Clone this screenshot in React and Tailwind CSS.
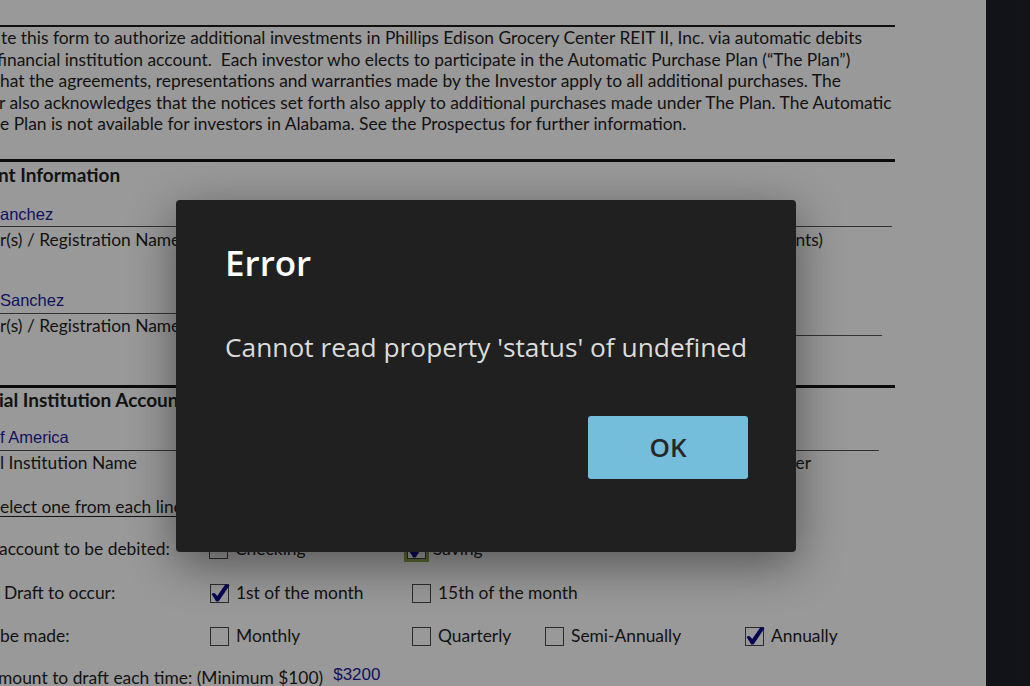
import React from "react";

// checkbox as drawn in the pdf form
function Box({ checked, focus }) {
  return (
    <span
      className={`relative inline-block h-[19px] w-[19px] shrink-0 border-[1.5px] border-[#4a4a4a] bg-white ${
        focus ? "outline-[3px] outline-solid outline-[#8fae4a]" : ""
      }`}
    >
      {checked && (
        <svg viewBox="0 0 20 20" className="absolute -left-[1px] -top-[2px] h-[20px] w-[20px]">
          <path
            d="M1.6 11 C2.8 9.6 4.3 9.6 5.3 10.7 L7.2 13 L15.6 1 L19.6 2.2 L8.6 18.4 L6.2 18.4 Z"
            fill="#0b0b8c"
          />
        </svg>
      )}
    </span>
  );
}

function Choice({ checked, focus, label, w }) {
  return (
    <div className={`flex items-center gap-[7px] ${w}`}>
      <Box checked={checked} focus={focus} />
      <span>{label}</span>
    </div>
  );
}

export default function App() {
  return (
    <div className="relative flex h-[686px] w-[1030px] overflow-hidden">
      {/* --- pdf page --- */}
      <div className="w-[986px] shrink-0 overflow-hidden bg-white font-['Lato','Liberation_Sans',sans-serif] text-[17.4px] text-[#1e1e1e]">
        <div className="h-[25px]" />
        <div className="h-[2px] w-[895px] bg-[#1c1c1c]" />
        <div className="whitespace-nowrap leading-[21.5px]">
          <div className="pl-[1px]">
            te this form to authorize additional investments in Phillips Edison Grocery Center REIT II, Inc. via automatic debits
          </div>
          <div className="-ml-[3px]">
            financial institution account.&nbsp; Each investor who elects to participate in the Automatic Purchase Plan (“The Plan”)
          </div>
          <div>
            hat the agreements, representations and warranties made by the Investor apply to all additional purchases. The
          </div>
          <div className="-ml-[1px]">
            r also acknowledges that the notices set forth also apply to additional purchases made under The Plan. The Automatic
          </div>
          <div>e Plan is not available for investors in Alabama. See the Prospectus for further information.</div>
        </div>
        <div className="h-[24.5px]" />
        <div className="h-[3px] w-[895px] bg-[#141414]" />

        {/* investor information */}
        <div className="flex h-[26px] items-center whitespace-nowrap text-[19px] font-bold">
          <span className="-ml-[2px]">nt Information</span>
        </div>
        <div className="h-[14px]" />
        <div className="h-[25px] w-[892px] border-b border-[#555] font-['Liberation_Sans',sans-serif] text-[16.5px] leading-[24px] text-[#1d1d9e]">
          anchez
        </div>
        <div className="flex h-[26px] w-[823px] items-center justify-between whitespace-nowrap">
          <span>r(s) / Registration Name</span>
          <span>(for joint accounts)</span>
        </div>
        <div className="h-[35px]" />
        <div className="flex w-[882px] items-start justify-between">
          <div className="w-[470px]">
            <div className="h-[26px] border-b border-[#555] font-['Liberation_Sans',sans-serif] text-[16.5px] leading-[25px] text-[#1d1d9e]">
              Sanchez
            </div>
            <div className="flex h-[24px] items-center whitespace-nowrap">r(s) / Registration Name</div>
          </div>
          <div className="h-[48px] w-[330px] border-b border-[#555]" />
        </div>
        <div className="h-[47px]" />
        <div className="h-[3px] w-[895px] bg-[#141414]" />

        {/* financial institution */}
        <div className="flex h-[24px] items-center whitespace-nowrap text-[19px] font-bold">
          <span className="-ml-[1px]">ial Institution Account Information</span>
        </div>
        <div className="h-[13px]" />
        <div className="flex w-[879px] items-start justify-between">
          <div className="w-[470px]">
            <div className="h-[26px] border-b border-[#555] font-['Liberation_Sans',sans-serif] text-[16.5px] leading-[25px] text-[#1d1d9e]">
              f America
            </div>
            <div className="flex h-[24px] items-center whitespace-nowrap">l Institution Name</div>
          </div>
          <div className="w-[330px]">
            <div className="h-[26px] border-b border-[#555]" />
            <div className="flex h-[24px] items-center justify-end whitespace-nowrap pr-[68px]">Account Number</div>
          </div>
        </div>
        <div className="h-[20px]" />
        <div className="flex h-[24px] items-center whitespace-nowrap underline decoration-1 underline-offset-[3px]">
          elect one from each line below
        </div>

        {/* options */}
        <div className="mt-[18px] flex h-[24px] items-center whitespace-nowrap">
          <span className="w-[210px] -ml-[1px]">account to be debited:</span>
          <Choice label="Checking" w="w-[198px]" />
          <Choice label="Saving" checked focus w="w-[200px]" />
        </div>
        <div className="mt-[20px] flex h-[24px] items-center whitespace-nowrap">
          <span className="w-[210px] pl-[4px]">Draft to occur:</span>
          <Choice label="1st of the month" checked w="w-[202px]" />
          <Choice label="15th of the month" w="w-[200px]" />
        </div>
        <div className="mt-[19px] flex h-[24px] items-center whitespace-nowrap">
          <span className="w-[210px]">be made:</span>
          <Choice label="Monthly" w="w-[202px]" />
          <Choice label="Quarterly" w="w-[133px]" />
          <Choice label="Semi-Annually" w="w-[200px]" />
          <Choice label="Annually" checked w="w-[120px]" />
        </div>
        <div className="mt-[18px] flex h-[24px] items-center gap-[10px] whitespace-nowrap">
          <span className="-ml-[2px]">mount to draft each time: (Minimum $100)</span>
          <span className="-mt-[6px] font-['Liberation_Sans',sans-serif] text-[17px] text-[#1d1d9e]">$3200</span>
        </div>
      </div>

      {/* viewer background strip */}
      <div className="flex-1 bg-[#1f2128]" />

      {/* modal backdrop */}
      <div className="absolute inset-0 bg-black/40" />

      {/* --- error dialog --- */}
      <div className="absolute left-[176px] top-[200px] flex h-[352px] w-[620px] flex-col rounded-[4px] bg-[#202020] pl-[49px] pr-[48px] pt-[38px] font-['Open_Sans','Noto_Sans',sans-serif] shadow-[0_12px_48px_rgba(0,0,0,0.45)]">
        <h2 className="text-[35px] font-semibold leading-[50px] text-white">Error</h2>
        <p className="mt-[43px] whitespace-nowrap text-[26.3px] leading-[32px] text-[#dcdcdc]">
          Cannot read property 'status' of undefined
        </p>
        <div className="mt-[53px] flex justify-end">
          <button className="h-[63px] w-[160px] rounded-[3px] bg-[#74bedc] text-[26px] font-semibold text-[#272727]">
            OK
          </button>
        </div>
      </div>
    </div>
  );
}
